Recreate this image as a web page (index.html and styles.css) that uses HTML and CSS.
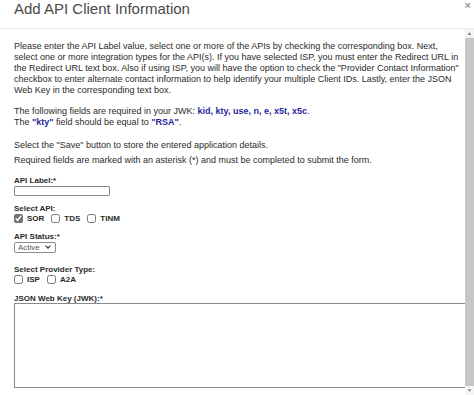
FILE: index.html
```html
<html>
  <head>
    <link rel="stylesheet" href="styles.css">
  </head>
  <body>
    <div class="dialog">
      <div class="dialogHead">
        <h1>Add API Client Information</h1>
        <span class="close">&times;</span>
      </div>
      <div class="dialogMain">
        <div class="dialogBody">
          <p>
            Please enter the API Label value, select one or more of the APIs by
            checking the corresponding box. Next, select one or more integration
            types for the API(s). If you have selected ISP, you must enter the
            Redirect URL in the Redirect URL text box. Also if using ISP, you will
            have the option to check the "Provider Contact Information" checkbox
            to enter alternate contact information to help identify your multiple
            Client IDs. Lastly, enter the JSON Web Key in the corresponding text box.
          </p>
          <p class="jwkNote">
            The following fields are required in your JWK:
            <b class="hl">kid, kty, use, n, e, x5t, x5c</b>.<br />
            The <b class="hl">"kty"</b> field should be equal to <b class="hl">"RSA"</b>.
          </p>
          <p class="tight">Select the "Save" button to store the entered application details.</p>
          <p>Required fields are marked with an asterisk (*) and must be completed to submit the form.</p>

          <div class="field labelField">
            <label for="apiLabel">API Label:*</label>
            <input id="apiLabel" type="text" class="textBox" />
          </div>
          <div class="field apiField">
            <label>Select API:</label>
            <div class="checks">
              <input type="checkbox" id="sor" checked /><label for="sor">SOR</label>
              <input type="checkbox" id="tds" /><label for="tds">TDS</label>
              <input type="checkbox" id="tinm" /><label for="tinm">TINM</label>
            </div>
          </div>
          <div class="field statusField">
            <label for="apiStatus">API Status:*</label>
            <span class="selectWrap">
              <select id="apiStatus">
                <option selected>Active</option>
                <option>Inactive</option>
              </select>
            </span>
          </div>
          <div class="field providerField">
            <label>Select Provider Type:</label>
            <div class="checks">
              <input type="checkbox" id="isp" /><label for="isp">ISP</label>
              <input type="checkbox" id="a2a" /><label for="a2a">A2A</label>
            </div>
          </div>
          <div class="field">
            <label for="jwk">JSON Web Key (JWK):*</label>
            <textarea id="jwk"></textarea>
          </div>
        </div>
        <div class="scrollbar">
          <span class="arrow">&#9650;</span>
          <span class="thumb"></span>
          <span class="arrow">&#9660;</span>
        </div>
      </div>
    </div>
  </body>
</html>
```

FILE: styles.css
```css
body {
  margin: 0;
  font-family: "Liberation Sans", Arial, sans-serif;
  color: #2b2b2b;
  background: #fff;
}

.dialog {
  height: 395px;
  display: flex;
  flex-direction: column;
  overflow: hidden;
}
.dialogHead {
  height: 28px;
  flex: none;
  display: flex;
  justify-content: space-between;
  border-bottom: 1px solid #ebebeb;
}
.dialogHead h1 {
  margin: 0;
  padding: 1px 0 0 14px;
  font-size: 15px;
  line-height: 16px;
  font-weight: normal;
  color: #4a4a4a;
}
.close {
  padding: 0 3px 0 0;
  font-size: 11px;
  line-height: 10px;
  font-weight: bold;
  color: #999;
}

.dialogMain {
  flex: 1;
  display: flex;
  min-height: 0;
}
.dialogBody {
  flex: 1;
  overflow: hidden;
  padding: 12px 2px 0 14px;
  font-size: 9px;
  line-height: 11px;
}
.dialogBody p {
  margin: 0 0 10px;
}
.dialogBody p.jwkNote {
  margin-bottom: 12px;
}
.dialogBody p.tight {
  margin-bottom: 4px;
}
.hl {
  color: #1f1f9e;
}

.field {
  margin-bottom: 9px;
}
.labelField {
  margin-bottom: 8px;
}
.statusField {
  margin-bottom: 12px;
}
.providerField {
  margin-bottom: 10px;
}
.field > label {
  display: block;
  font-size: 8px;
  line-height: 9px;
  font-weight: bold;
}
.textBox {
  display: block;
  margin-top: 1px;
  width: 96px;
  height: 10px;
  padding: 0;
  border: 1px solid #8a8a8a;
  border-radius: 1px;
}
.checks {
  display: flex;
  align-items: center;
  height: 10px;
}
.checks input {
  width: 9px;
  height: 9px;
  margin: 0 4px 0 0;
  accent-color: #737373;
}
.checks label {
  font-size: 8px;
  font-weight: bold;
  margin-right: 7px;
}
.selectWrap {
  position: relative;
  display: inline-block;
  margin-top: 1px;
}
.selectWrap::after {
  content: "";
  position: absolute;
  right: 6px;
  top: 2px;
  width: 3px;
  height: 3px;
  border-right: 1.5px solid #222;
  border-bottom: 1.5px solid #222;
  transform: rotate(45deg);
}
select {
  display: block;
  appearance: none;
  height: 11px;
  width: 42px;
  padding: 0 0 0 3px;
  font-size: 8px;
  line-height: 9px;
  color: #555;
  background: #fff;
  font-family: "Liberation Sans", Arial, sans-serif;
  border: 1px solid #8a8a8a;
  border-radius: 2px;
}
textarea {
  display: block;
  width: calc(100% + 8px);
  height: 85px;
  border: 1px solid #8a8a8a;
  resize: none;
}

.scrollbar {
  width: 9px;
  flex: none;
  display: flex;
  flex-direction: column;
  align-items: center;
  background: #f4f4f4;
}
.arrow {
  font-size: 5px;
  line-height: 9px;
  color: #777;
}
.thumb {
  flex: 1;
  width: 9px;
  background: #c6c6c6;
}
```
